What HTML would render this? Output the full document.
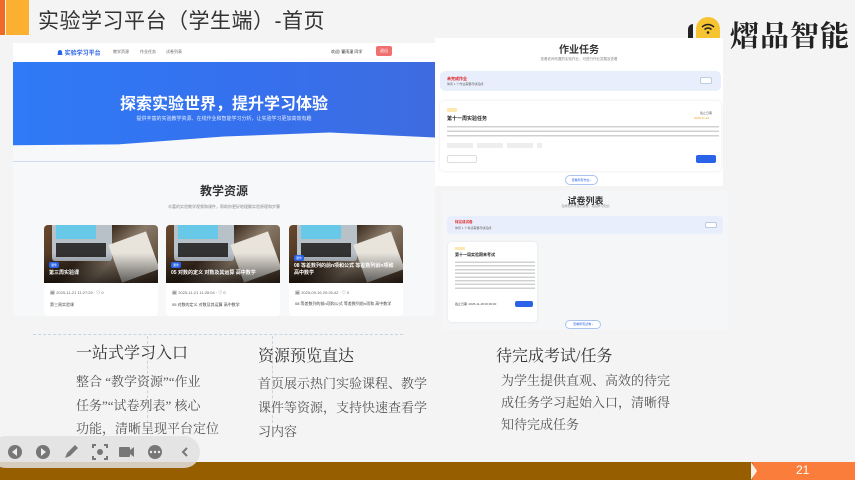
<!DOCTYPE html>
<html><head><meta charset="utf-8"><style>
*{margin:0;padding:0;box-sizing:border-box}
body{width:855px;height:480px;overflow:hidden;background:#f4f4f4;position:relative;font-family:"Liberation Sans","Noto Sans CJK SC",sans-serif;}
.a{position:absolute}
.serif{font-family:"Liberation Serif","Noto Serif CJK SC",serif}
.t{font-size:4px;color:#666;white-space:nowrap}
.card{background:#fff;border-radius:4px;overflow:hidden}
.img{height:58px;background:linear-gradient(135deg,#6b4a2e,#3a2a1e 40%,#8a7a68 60%,#4a3626);position:relative}
.lap{position:absolute;left:8px;top:-4px;width:60px;height:40px;background:#b8c0c8;border-radius:3px}
.scr{position:absolute;left:12px;top:0;width:40px;height:14px;background:#68c8e8}
.kb{position:absolute;left:12px;top:18px;width:50px;height:14px;background:#333}
.nb{position:absolute;left:70px;top:12px;width:40px;height:40px;background:#e8e4dc;transform:rotate(-20deg)}
.shade{position:absolute;left:0;right:0;bottom:0;height:30px;background:linear-gradient(transparent,rgba(0,0,0,.6))}
.tag{position:absolute;background:#2a62e8;color:#fff;font-size:3px;padding:1px 2px;border-radius:2px}
.ct{position:absolute;color:#fff;font-size:5px;font-weight:bold;left:5px;line-height:7px}
.tx{white-space:nowrap}
</style></head><body>
<!-- header -->
<div class="a" style="left:0;top:0;width:5px;height:35px;background:#f06a2a"></div>
<div class="a" style="left:6px;top:0;width:23px;height:35px;background:#fbb031"></div>
<div class="a" style="left:38px;top:5px;font-size:21px;color:#333;white-space:nowrap;letter-spacing:0.5px">实验学习平台（学生端）-首页</div>
<!-- logo -->
<div class="a" style="left:688px;top:24px;width:5px;height:14px;background:#222;border-radius:5px 0 0 0"></div>
<div class="a" style="left:696px;top:17px;width:24px;height:22px;background:#f6c430;border-radius:12px 12px 0 0"></div>
<svg class="a" style="left:700px;top:21px" width="16" height="16" viewBox="0 0 16 16"><g fill="none" stroke="#222" stroke-width="1.5"><path d="M2 6q6-5 12 0"/><path d="M4.5 8.5q3.5-3 7 0"/></g><circle cx="8" cy="11.5" r="1.3" fill="#222"/></svg>
<div class="a serif" style="left:730px;top:14px;font-size:29px;font-weight:bold;color:#222;letter-spacing:1px;white-space:nowrap">熠品智能</div>

<!-- left screenshot -->
<div class="a" style="left:13px;top:43px;width:422px;height:273px;background:#f7f8fa;overflow:hidden">
  <div class="a" style="left:0;top:0;width:422px;height:19px;background:#fff"></div>
  <div class="a" style="left:44px;top:5px;font-size:6px;color:#2a62e8;font-weight:bold">☗ 实验学习平台</div>
  <div class="a t" style="left:100px;top:6px">教学资源</div>
  <div class="a t" style="left:127px;top:6px">作业任务</div>
  <div class="a t" style="left:153px;top:6px">试卷列表</div>
  <div class="a t" style="left:318px;top:6px;color:#333">欢迎! 瞿雨潼 同学</div>
  <div class="a" style="left:363px;top:3px;width:16px;height:10px;background:#f07070;border-radius:2px;color:#fff;font-size:4px;text-align:center;line-height:10px">退出</div>
  <div class="a" style="left:0;top:19px;width:422px;height:98px;background:linear-gradient(90deg,#2f7af6,#3570ee 55%,#3e6ce0);clip-path:polygon(0 0,100% 0,100% 77%,75% 72%,50% 76%,25% 84%,0 85%)"></div>
  <div class="a" style="left:0;top:47px;width:422px;text-align:center;font-size:16px;font-weight:bold;color:#fff">探索实验世界，提升学习体验</div>
  <div class="a" style="left:0;top:72px;width:422px;text-align:center;font-size:5px;color:#e6eeff">提供丰富的实验教学资源、在线作业和智能学习分析，让实验学习更加高效有趣</div>
  <div class="a" style="left:0;top:118px;width:422px;height:1px;background:#cfdcf5"></div>
  <div class="a" style="left:0;top:139px;width:422px;text-align:center;font-size:12px;font-weight:bold;color:#333">教学资源</div>
  <div class="a" style="left:0;top:161px;width:422px;text-align:center;font-size:4px;color:#888">丰富的实验教学视频和课件，帮助你更好地理解实验原理和步骤</div>
  <div class="a card" style="left:31px;top:182px;width:114px;height:91px"><div class="img"><div class="lap"></div><div class="scr"></div><div class="kb"></div><div class="nb"></div><div class="shade"></div><div class="tag" style="left:5px;top:37px">课件</div><div class="ct" style="top:45px">第三周实验课</div></div><div class="a t" style="left:6px;top:65px">🗓 2025-11-21 11:27:29 · ♡ 0</div><div class="a t" style="left:6px;top:77px;color:#444">第三周实验课</div></div>
  <div class="a card" style="left:153px;top:182px;width:114px;height:91px"><div class="img"><div class="lap"></div><div class="scr"></div><div class="kb"></div><div class="nb"></div><div class="shade"></div><div class="tag" style="left:5px;top:37px">课件</div><div class="ct" style="top:45px">05 对数的定义 对数及其运算 高中数学</div></div><div class="a t" style="left:6px;top:65px">🗓 2025-11-21 11:26:04 · ♡ 0</div><div class="a t" style="left:6px;top:77px;color:#444">05 对数的定义 对数及其运算 高中数学</div></div>
  <div class="a card" style="left:276px;top:182px;width:114px;height:91px"><div class="img"><div class="lap"></div><div class="scr"></div><div class="kb"></div><div class="nb"></div><div class="shade"></div><div class="tag" style="left:5px;top:30px">课件</div><div class="ct" style="top:38px;width:104px;white-space:normal">08 等差数列的前n项和公式 等差数列前n项和 高中数学</div></div><div class="a t" style="left:6px;top:65px">🗓 2025-09-16 20:26:42 · ♡ 0</div><div class="a t" style="left:6px;top:75px;color:#444;white-space:normal;width:104px;line-height:7px">08 等差数列的前n项和公式 等差数列前n项和 高中数学</div></div>
</div>

<!-- right screenshot 1 -->
<div class="a" style="left:435px;top:38px;width:288px;height:148px;background:#fff">
  <div class="a" style="left:0;top:3px;width:288px;text-align:center;font-size:10px;font-weight:bold;color:#333">作业任务</div>
  <div class="a" style="left:0;top:19px;width:288px;text-align:center;font-size:3.5px;color:#888">查看老师布置的实验作业，可进行作业答题及查看</div>
  <div class="a" style="left:5px;top:33px;width:281px;height:20px;background:#e8eefc;border-radius:5px"></div>
  <div class="a" style="left:12px;top:38px;font-size:4px;color:#e02020;font-weight:bold">未完成作业</div>
  <div class="a t" style="left:12px;top:44px;font-size:3px">你有 1 个作业需要尽快完成</div>
  <div class="a" style="left:265px;top:39px;width:12px;height:7px;background:#fff;border:1px solid #bcd;border-radius:2px"></div>
  <div class="a" style="left:5px;top:63px;width:281px;height:70px;background:#fff;border-radius:4px;box-shadow:0 0 3px rgba(0,0,0,.1)"></div>
  <div class="a" style="left:12px;top:70px;width:10px;height:4px;background:#fde8b0;border-radius:1px"></div>
  <div class="a" style="left:12px;top:77px;font-size:5px;font-weight:bold;color:#222">第十一周实验任务</div>
  <div class="a t" style="left:265px;top:73px;font-size:3px">截止日期</div>
  <div class="a" style="left:259px;top:78px;font-size:3px;color:#f0a020">2025-11-24</div>
  <div class="a" style="left:12px;top:87px;width:272px;height:14px;background:repeating-linear-gradient(#fff 0 1px,#8a8a8a 1px 2.5px,#fff 2.5px 4.5px);opacity:.4"></div>
  <div class="a" style="left:12px;top:105px;width:95px;height:5px;background:repeating-linear-gradient(90deg,#eee 0 26px,#fff 26px 30px)"></div>
  <div class="a" style="left:12px;top:117px;width:30px;height:8px;border:1px solid #ddd;border-radius:2px"></div>
  <div class="a" style="left:261px;top:117px;width:20px;height:8px;background:#2a62e8;border-radius:2px"></div>
  <div class="a" style="left:130px;top:137px;width:33px;height:10px;border:1px solid #aac4f0;border-radius:6px;font-size:3px;color:#2a62e8;text-align:center;line-height:8px">查看所有作业 ›</div>
</div>

<!-- right screenshot 2 -->
<div class="a" style="left:443px;top:190px;width:285px;height:140px;background:#f5f6f8">
  <div class="a" style="left:0;top:4px;width:285px;text-align:center;font-size:9px;font-weight:bold;color:#333">试卷列表</div>
  <div class="a" style="left:0;top:14px;width:285px;text-align:center;font-size:3px;color:#888">完成老师布置的试卷，巩固学习知识</div>
  <div class="a" style="left:4px;top:26px;width:276px;height:18px;background:#e8eefc;border-radius:4px"></div>
  <div class="a" style="left:12px;top:30px;font-size:3.5px;color:#e02020;font-weight:bold">待完成试卷</div>
  <div class="a t" style="left:12px;top:36px;font-size:3px">你有 1 个考试需要尽快完成</div>
  <div class="a" style="left:262px;top:32px;width:12px;height:6px;background:#fff;border:1px solid #bcd;border-radius:2px"></div>
  <div class="a" style="left:5px;top:52px;width:89px;height:80px;background:#fff;border-radius:4px;box-shadow:0 0 3px rgba(0,0,0,.08)"></div>
  <div class="a" style="left:12px;top:57px;width:10px;height:3px;background:#fde8b0"></div>
  <div class="a" style="left:12px;top:62px;font-size:4px;font-weight:bold;color:#222">第十一周实验期末考试</div>
  <div class="a" style="left:12px;top:71px;width:80px;height:30px;background:repeating-linear-gradient(#fff 0 .5px,#999 .5px 2px,#fff 2px 3.7px);opacity:.45"></div>
  <div class="a t" style="left:12px;top:112px;font-size:3px;color:#444">截止日期: 2025-11-18 00:00:00</div>
  <div class="a" style="left:72px;top:111px;width:18px;height:6px;background:#2a62e8;border-radius:2px"></div>
  <div class="a" style="left:122px;top:130px;width:36px;height:9px;border:1px solid #aac4f0;border-radius:5px;background:#fff;font-size:3px;color:#2a62e8;text-align:center;line-height:7px">查看所有试卷 ›</div>
</div>

<!-- dividers -->
<div class="a" style="left:33px;top:334px;width:370px;border-top:1px dashed #c8d4e0"></div>
<div class="a" style="left:147px;top:336px;height:92px;border-left:1px dashed #c8d4e0"></div>
<div class="a" style="left:272px;top:336px;height:92px;border-left:1px dashed #c8d4e0"></div>

<div class="a serif" style="left:76px;top:340px;font-size:16px;color:#333;white-space:nowrap">一站式学习入口</div>
<div class="a serif tx" style="left:76px;top:370px;font-size:13px;line-height:23.5px;color:#555">整合 “教学资源”“作业<br>任务”“试卷列表” 核心<br>功能，清晰呈现平台定位</div>
<div class="a serif" style="left:258px;top:343px;font-size:16px;color:#333;white-space:nowrap">资源预览直达</div>
<div class="a serif tx" style="left:258px;top:372px;font-size:13px;line-height:24px;color:#555">首页展示热门实验课程、教学<br>课件等资源，支持快速查看学<br>习内容</div>
<div class="a serif" style="left:496px;top:343px;font-size:16px;color:#333;white-space:nowrap">待完成考试/任务</div>
<div class="a serif tx" style="left:501px;top:370px;font-size:13px;line-height:22px;color:#555">为学生提供直观、高效的待完<br>成任务学习起始入口，清晰得<br>知待完成任务</div>

<!-- bottom bar -->
<div class="a" style="left:0;top:462px;width:855px;height:18px;background:#975e00"></div>
<div class="a" style="left:752px;top:462px;width:103px;height:18px;background:#fa7d3c;clip-path:polygon(0 0,100% 0,100% 100%,0 100%,4% 50%)"></div>
<div class="a" style="left:751px;top:462px;width:6px;height:18px;clip-path:polygon(0 0,100% 50%,0 100%);background:#fff;opacity:.9"></div>
<div class="a" style="left:796px;top:463px;font-size:12px;color:#fff">21</div>

<!-- toolbar -->
<div class="a" style="left:-10px;top:436px;width:210px;height:32px;background:rgba(225,225,225,.85);border-radius:16px"></div>
<svg class="a" style="left:0;top:436px" width="200" height="32" viewBox="0 0 200 32">
<g fill="#777">
<circle cx="15" cy="16" r="7"/><circle cx="43" cy="16" r="7"/><circle cx="155" cy="16" r="7"/>
<path d="M65 22l2-5 8-8 3 3-8 8z"/>
<rect x="119" y="11" width="11" height="10" rx="1"/><path d="M130 14l4-3v10l-4-3z"/>
<circle cx="100" cy="16" r="3"/>
</g>
<g fill="#eee"><path d="M17 12v8l-5-4z"/><path d="M41 12v8l5-4z"/><circle cx="151" cy="16" r="1.2"/><circle cx="155" cy="16" r="1.2"/><circle cx="159" cy="16" r="1.2"/></g>
<g fill="none" stroke="#777" stroke-width="2"><path d="M93 12v-3h3M104 9h3v3M107 20v3h-3M96 23h-3v-3"/><path d="M187 12l-4 4 4 4"/></g>
</svg>
</body></html>
